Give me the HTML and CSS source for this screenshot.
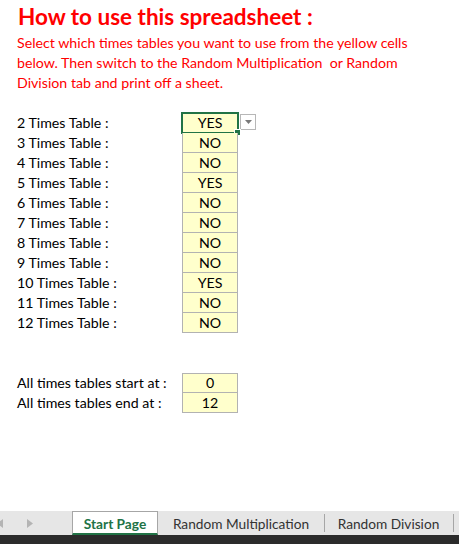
FILE: index.html
```html
<!DOCTYPE html>
<html>
<head>
<meta charset="utf-8">
<link rel="stylesheet" href="styles.css">
</head>
<body>
<div class="sheet">
  <div class="title">How to use this spreadsheet :</div>
  <div class="intro">
    <div class="line">Select which times tables you want to use from the yellow cells</div>
    <div class="line">below. Then switch to the Random Multiplication&nbsp; or Random</div>
    <div class="line">Division tab and print off a sheet.</div>
  </div>
  <div class="spacer"></div>
  <div class="table">
    <div class="row"><span class="label">2 Times Table :</span><span class="cell first selected">YES<span class="dd"><svg width="7" height="4" viewBox="0 0 7 4"><path d="M0 0H7L3.5 4Z" fill="#7a7a7a"/></svg></span><span class="handle"></span></span></div>
    <div class="row"><span class="label">3 Times Table :</span><span class="cell">NO</span></div>
    <div class="row"><span class="label">4 Times Table :</span><span class="cell">NO</span></div>
    <div class="row"><span class="label">5 Times Table :</span><span class="cell">YES</span></div>
    <div class="row"><span class="label">6 Times Table :</span><span class="cell">NO</span></div>
    <div class="row"><span class="label">7 Times Table :</span><span class="cell">NO</span></div>
    <div class="row"><span class="label">8 Times Table :</span><span class="cell">NO</span></div>
    <div class="row"><span class="label">9 Times Table :</span><span class="cell">NO</span></div>
    <div class="row"><span class="label">10 Times Table :</span><span class="cell">YES</span></div>
    <div class="row"><span class="label">11 Times Table :</span><span class="cell">NO</span></div>
    <div class="row"><span class="label">12 Times Table :</span><span class="cell">NO</span></div>
  </div>
  <div class="spacer2"></div>
  <div class="table">
    <div class="row"><span class="label">All times tables start at :</span><span class="cell first">0</span></div>
    <div class="row"><span class="label">All times tables end at :</span><span class="cell">12</span></div>
  </div>
</div>
<div class="tabbar">
  <div class="nav">
    <svg width="6" height="9" viewBox="0 0 6 9" class="prev"><path d="M6 0V9L0 4.5Z" fill="#b4b4b4"/></svg>
    <svg width="6" height="9" viewBox="0 0 6 9" class="next"><path d="M0 0V9L6 4.5Z" fill="#b4b4b4"/></svg>
  </div>
  <div class="tab active">Start Page</div>
  <div class="tab mult">Random Multiplication</div>
  <div class="tab div">Random Division</div>
  <div class="tab last"></div>
</div>
<div class="status"></div>
</body>
</html>
```
FILE: styles.css
```css
html, body {
  margin: 0;
  padding: 0;
  background: #ffffff;
  width: 459px;
  height: 544px;
  overflow: hidden;
  font-family: Lato, "Open Sans", "Liberation Sans", sans-serif;
}
.sheet {
  height: 511px;
  padding-left: 17px;
  box-sizing: border-box;
}
.title {
  height: 33px;
  line-height: 33px;
  font-size: 22.5px;
  font-weight: bold;
  color: #ff0000;
  padding-left: 1px;
  white-space: nowrap;
}
.line {
  height: 20px;
  line-height: 20px;
  font-size: 14.2px;
  color: #ff0000;
  white-space: nowrap;
}
.spacer { height: 20px; }
.spacer2 { height: 40px; }
.row {
  display: flex;
  height: 20px;
  align-items: stretch;
}
.label {
  width: 165px;
  line-height: 20px;
  font-size: 14.2px;
  color: #000;
  white-space: nowrap;
}
.cell {
  position: relative;
  width: 56px;
  box-sizing: border-box;
  background: #ffffcc;
  border-left: 1px solid #b2b2b2;
  border-right: 1px solid #b2b2b2;
  border-bottom: 1px solid #b2b2b2;
  text-align: center;
  line-height: 19px;
  font-size: 14.2px;
  color: #000;
}
.cell.first {
  border-top: 1px solid #b2b2b2;
  line-height: 18px;
}
.selected::before {
  content: "";
  position: absolute;
  left: -2px;
  top: -2px;
  right: -2px;
  bottom: -2px;
  border: 2px solid #217346;
}
.handle {
  position: absolute;
  right: -4px;
  bottom: -4px;
  width: 5px;
  height: 5px;
  background: #217346;
  border: 1px solid #fff;
}
.dd {
  position: absolute;
  left: 57px;
  top: 0;
  width: 16px;
  height: 16px;
  box-sizing: border-box;
  border: 1px solid #b7b7b7;
  background: #fff;
  display: flex;
  align-items: center;
  justify-content: center;
}
.tabbar {
  display: flex;
  height: 24px;
  background: #e6e6e6;
  align-items: stretch;
  white-space: nowrap;
}
.nav {
  width: 72px;
  flex: none;
  position: relative;
}
.nav svg { position: absolute; top: 8px; }
.nav .prev { left: -3px; }
.nav .next { left: 27px; }
.tab {
  flex: none;
  font-size: 13.7px;
  color: #333;
  line-height: 25px;
  text-align: center;
  position: relative;
  box-sizing: border-box;
}
.tab.mult { width: 166px; }
.tab.div { width: 129px; }
.tab.last { width: 20px; }
.tab.div::before, .tab.last::before {
  content: "";
  position: absolute;
  left: 0;
  top: 3px;
  height: 18px;
  border-left: 1px solid #a6a6a6;
}
.tab.active {
  background: #fff;
  color: #217346;
  font-weight: bold;
  width: 86px;
  border-left: 1px solid #a6a6a6;
  border-right: 1px solid #a6a6a6;
  border-top: 1px solid #a6a6a6;
  line-height: 23px;
  border-bottom: 2px solid #217346;
  height: 24px;
}
.status {
  height: 9px;
  background: #2b2b2b;
}
```
